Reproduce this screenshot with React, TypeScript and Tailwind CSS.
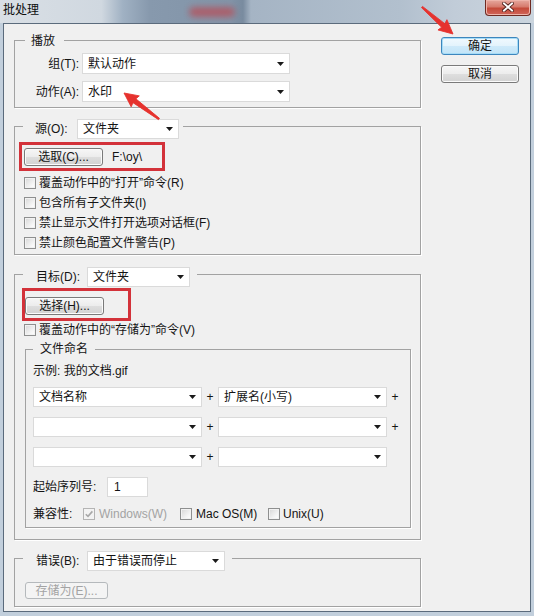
import React from "react";

const FONT = "font-['Liberation_Sans','Noto_Sans_CJK_SC',sans-serif]";

function Caret() {
  return (
    <svg width="7" height="4" viewBox="0 0 7 4" className="shrink-0">
      <path d="M0 0H7L3.5 4Z" fill="#1a1a1a" />
    </svg>
  );
}

function Dropdown({ value, className }: { value?: string; className: string }) {
  return (
    <div
      className={`flex items-center justify-between bg-white border border-[#dadada] pl-[5px] pr-[5px] ${className}`}
    >
      <span className="whitespace-nowrap">{value}</span>
      <Caret />
    </div>
  );
}

type BtnKind = "normal" | "default" | "disabled";

function Btn({ label, kind = "normal", className }: { label: string; kind?: BtnKind; className: string }) {
  const look =
    kind === "default"
      ? "border-[#3d86bd] bg-[linear-gradient(#f1f9fe,#e3f3fc_50%,#cfeafa_50%,#c2e4f7)] shadow-[inset_0_0_0_1px_#a6dcf7]"
      : kind === "disabled"
        ? "border-[#b5b9bc] bg-[#f4f4f4] text-[#a3a3a3]"
        : "border-[#7a7a7a] bg-[linear-gradient(#f6f6f6,#ececec_50%,#dedede_50%,#d2d2d2)] shadow-[inset_0_0_0_1px_#fbfbfb]";
  return (
    <div
      className={`flex items-center justify-center rounded-[3px] border whitespace-nowrap ${look} ${className}`}
    >
      {label}
    </div>
  );
}

function Box({ checked = false, disabled = false }: { checked?: boolean; disabled?: boolean }) {
  return (
    <span
      className={
        disabled
          ? "relative w-[12px] h-[12px] shrink-0 border border-[#b4b4b4] bg-[#f3f3f3]"
          : "relative w-[12px] h-[12px] shrink-0 border border-[#8e8f8f] bg-[linear-gradient(135deg,#d6d6d6,#f6f6f6_70%,#ffffff)] shadow-[inset_0_0_0_1px_#f2f2f2]"
      }
    >
      {checked && (
        <svg width="10" height="10" viewBox="0 0 10 10" className="absolute left-0 top-0">
          <path
            d="M1.8 5.2L4 7.4L8.4 2.4"
            fill="none"
            stroke={disabled ? "#a8a8a8" : "#2b2b2b"}
            strokeWidth="1.6"
          />
        </svg>
      )}
    </span>
  );
}

function CheckRow({ label, className }: { label: string; className: string }) {
  return (
    <div className={`flex items-center gap-[3px] pl-[9px] ${className}`}>
      <Box />
      <span className="whitespace-nowrap">{label}</span>
    </div>
  );
}

function Arrow({ x1, y1, x2, y2 }: { x1: number; y1: number; x2: number; y2: number }) {
  const dx = x2 - x1;
  const dy = y2 - y1;
  const len = Math.sqrt(dx * dx + dy * dy);
  const ang = (Math.atan2(dy, dx) * 180) / Math.PI;
  const h = 13;
  const pts = `0,-0.8 ${len - h},-2.4 ${len - h - 1},-6.8 ${len},0 ${len - h - 1},6.8 ${len - h},2.4 0,0.8`;
  return (
    <g transform={`translate(${x1} ${y1}) rotate(${ang})`}>
      <polygon points={pts} fill="#e6322e" stroke="#e6322e" strokeWidth="0.8" strokeLinejoin="round" />
    </g>
  );
}

function CloseButton() {
  return (
    <div className="mr-[3px] w-[46px] h-[16px] rounded-b-[4px] border border-t-0 border-[#6e2a22] bg-[linear-gradient(#e6a89e,#d67b6d_45%,#c44a39_55%,#d0655a)] shadow-[inset_0_0_0_1px_#eeb4aa] flex items-center justify-center">
      <svg width="12" height="10" viewBox="0 0 12 10" className="mb-[2px]">
        <path d="M2 1.5L10 8.5M10 1.5L2 8.5" stroke="#4a1c17" strokeWidth="3.6" strokeLinecap="square" />
        <path d="M2 1.5L10 8.5M10 1.5L2 8.5" stroke="#ffffff" strokeWidth="2" strokeLinecap="square" />
      </svg>
    </div>
  );
}

export default function App() {
  return (
    <div
      className={`relative w-[534px] h-[616px] overflow-hidden bg-[#c2cfdc] text-[12px] leading-[16px] text-[#141414] ${FONT}`}
    >
      {/* title bar over a blurred desktop */}
      <div className="h-[23px] flex items-start justify-between bg-[linear-gradient(90deg,#d9dfe5_0%,#d0d8e0_19%,#a0b1c3_23%,#8799ad_28%,#8294a8_43%,#798b9f_45.5%,#a5b4c4_47%,#b2c0ce_75%,#c1ccd8_85%,#cbd5de_100%)]">
        <span className="mt-[2px] ml-[3px] text-[12px] leading-[16px] text-[#0c0c0c]">批处理</span>
        <div className="ml-[150px] mt-[7px] w-[46px] h-[10px] rounded-full bg-[#b4525c] blur-[3px] opacity-80" />
        <div className="flex-1" />
        <CloseButton />
      </div>

      {/* client area */}
      <div className="ml-[3px] w-[528px] h-[589px] border border-[#5b6b7c] bg-[#f0f0f0]">
        <div className="flex items-start pl-[10px]">
          {/* left column: group boxes */}
          <div className="w-[407px] pt-[8px] flex flex-col">
            {/* 播放 */}
            <fieldset className="border border-[#a2a2a2] shadow-[1px_1px_0_#ffffff]">
              <legend className="ml-[10px] pl-[6px] pr-[9px] pt-[1px] leading-[16px]">播放</legend>
              <div className="pt-[4px] pb-[5px] flex flex-col gap-[7px]">
                <div className="flex items-center">
                  <span className="w-[64px] text-right whitespace-nowrap">组(T):</span>
                  <Dropdown value="默认动作" className="ml-[3px] w-[208px] h-[21px]" />
                </div>
                <div className="flex items-center">
                  <span className="w-[64px] text-right whitespace-nowrap">动作(A):</span>
                  <Dropdown value="水印" className="ml-[3px] w-[208px] h-[21px]" />
                </div>
              </div>
            </fieldset>

            {/* 源 */}
            <fieldset className="mt-[5px] border border-[#a2a2a2] shadow-[1px_1px_0_#ffffff]">
              <legend className="ml-[8px] pl-[12px] pr-[4px] pt-[6px]">
                <div className="flex items-center">
                  <span className="w-[42px] whitespace-nowrap">源(O):</span>
                  <Dropdown value="文件夹" className="w-[102px] h-[20px]" />
                </div>
              </legend>
              <div className="pb-[1px]">
                <div className="mt-[3px] ml-[4px] w-[146px] h-[29px] border-[3px] border-[#d3323a] flex items-center pl-[2px]">
                  <Btn label="选取(C)..." className="w-[79px] h-[18px]" />
                  <span className="ml-[9px] whitespace-nowrap">F:\oy\</span>
                </div>
                <div className="mt-[2px] flex flex-col">
                  <CheckRow label="覆盖动作中的“打开”命令(R)" className="h-[20px]" />
                  <CheckRow label="包含所有子文件夹(I)" className="h-[20px]" />
                  <CheckRow label="禁止显示文件打开选项对话框(F)" className="h-[20px]" />
                  <CheckRow label="禁止颜色配置文件警告(P)" className="h-[20px]" />
                </div>
              </div>
            </fieldset>

            {/* 目标 */}
            <fieldset className="mt-[6px] border border-[#a2a2a2] shadow-[1px_1px_0_#ffffff]">
              <legend className="ml-[8px] pl-[13px] pr-[7px] pt-[6px]">
                <div className="flex items-center">
                  <span className="w-[51px] whitespace-nowrap">目标(D):</span>
                  <Dropdown value="文件夹" className="w-[103px] h-[20px]" />
                </div>
              </legend>
              <div className="pb-[11px]">
                <div className="mt-[1px] ml-[7px] w-[109px] h-[33px] border-[3px] border-[#d3323a] pt-[6px]">
                  <Btn label="选择(H)..." className="w-[79px] h-[18px]" />
                </div>
                <CheckRow label="覆盖动作中的“存储为”命令(V)" className="h-[18px]" />

                {/* 文件命名 */}
                <fieldset className="mt-[2px] ml-[10px] w-[386px] border border-[#a2a2a2] shadow-[1px_1px_0_#ffffff]">
                  <legend className="ml-[7px] pl-[7px] pr-[7px] leading-[16px]">文件命名</legend>
                  <div className="pl-[7px] pt-[6px] pb-[4px]">
                    <div className="h-[16px] whitespace-nowrap">示例: 我的文档.gif</div>
                    <div className="mt-[8px] flex items-center">
                      <Dropdown value="文档名称" className="w-[169px] h-[20px]" />
                      <span className="w-[16px] text-center">+</span>
                      <Dropdown value="扩展名(小写)" className="w-[169px] h-[20px]" />
                      <span className="w-[16px] text-center">+</span>
                    </div>
                    <div className="mt-[10px] flex items-center">
                      <Dropdown className="w-[169px] h-[20px]" />
                      <span className="w-[16px] text-center">+</span>
                      <Dropdown className="w-[169px] h-[20px]" />
                      <span className="w-[16px] text-center">+</span>
                    </div>
                    <div className="mt-[10px] flex items-center">
                      <Dropdown className="w-[169px] h-[20px]" />
                      <span className="w-[16px] text-center">+</span>
                      <Dropdown className="w-[169px] h-[20px]" />
                    </div>
                    <div className="mt-[10px] h-[20px] flex items-center">
                      <span className="w-[74px] whitespace-nowrap">起始序列号:</span>
                      <div className="w-[41px] h-[20px] bg-white border border-[#dadada] pl-[6px] flex items-center">
                        1
                      </div>
                    </div>
                    <div className="mt-[8px] h-[18px] flex items-center">
                      <span className="w-[50px] whitespace-nowrap">兼容性:</span>
                      <div className="w-[97px] flex items-center gap-[4px]">
                        <Box checked disabled />
                        <span className="whitespace-nowrap text-[#a3a3a3]">Windows(W)</span>
                      </div>
                      <div className="w-[88px] flex items-center gap-[4px]">
                        <Box />
                        <span className="whitespace-nowrap">Mac OS(M)</span>
                      </div>
                      <div className="flex items-center gap-[3px]">
                        <Box />
                        <span className="whitespace-nowrap">Unix(U)</span>
                      </div>
                    </div>
                  </div>
                </fieldset>
              </div>
            </fieldset>

            {/* 错误 */}
            <fieldset className="mt-[5px] border border-[#a2a2a2] shadow-[1px_1px_0_#ffffff]">
              <legend className="ml-[8px] pl-[13px] pr-[7px] pt-[6px]">
                <div className="flex items-center">
                  <span className="w-[51px] whitespace-nowrap">错误(B):</span>
                  <Dropdown value="由于错误而停止" className="w-[138px] h-[20px]" />
                </div>
              </legend>
              <div className="pt-[11px] pb-[7px] pl-[10px]">
                <Btn label="存储为(E)..." kind="disabled" className="w-[83px] h-[17px]" />
              </div>
            </fieldset>
          </div>

          {/* right column: dialog buttons */}
          <div className="ml-[20px] pt-[13px] flex flex-col gap-[10px]">
            <Btn label="确定" kind="default" className="w-[78px] h-[18px]" />
            <Btn label="取消" className="w-[78px] h-[18px]" />
          </div>
        </div>
      </div>

      {/* red pointer arrows */}
      <svg className="absolute left-0 top-0 pointer-events-none" width="534" height="616">
        <Arrow x1={422} y1={7} x2={453} y2={34} />
        <Arrow x1={159} y1={119} x2={124} y2={93} />
      </svg>
    </div>
  );
}
